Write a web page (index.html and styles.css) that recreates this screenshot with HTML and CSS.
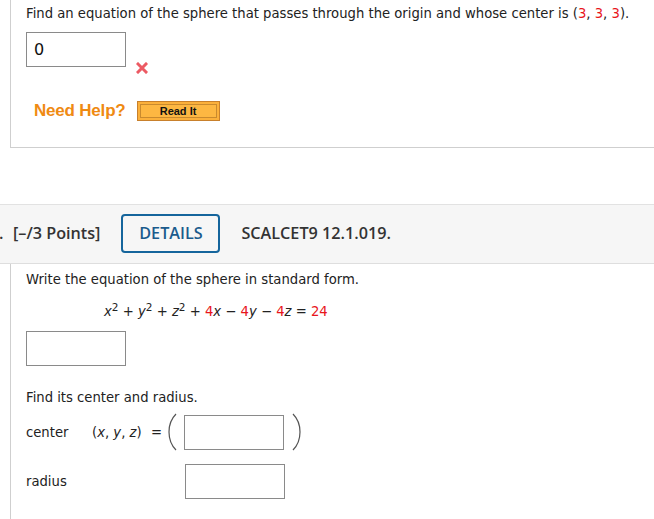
FILE: index.html
```html
<!DOCTYPE html>
<html>
<head>
<meta charset="utf-8">
<link rel="stylesheet" href="styles.css">
</head>
<body>
<div class="q1">
  <p class="prompt">Find an equation of the sphere that passes through the origin and whose center is (<span class="red">3</span>, <span class="red">3</span>, <span class="red">3</span>).</p>
  <div class="answer-row">
    <div class="box box-filled">0</div>
    <svg class="wrong" width="12" height="12" viewBox="0 0 12 12"><path d="M2 2 L10 10 M10 2 L2 10" stroke="#ec5a63" stroke-width="3" stroke-linecap="square"/></svg>
  </div>
  <div class="help-row">
    <span class="need-help">Need Help?</span>
    <span class="read-it"><span class="read-it-inner">Read It</span></span>
  </div>
</div>

<div class="q2-head">
  <span class="qnum">.</span>
  <span class="points">[–/3 Points]</span>
  <span class="details">DETAILS</span>
  <span class="code">SCALCET9 12.1.019.</span>
</div>
<div class="q2">
  <p class="prompt p-write">Write the equation of the sphere in standard form.</p>
  <p class="equation"><i>x</i><sup>2</sup> + <i>y</i><sup>2</sup> + <i>z</i><sup>2</sup> + <span class="red">4</span><i>x</i> − <span class="red">4</span><i>y</i> − <span class="red">4</span><i>z</i> = <span class="red">24</span></p>
  <div class="box box-std"></div>
  <p class="prompt p-find">Find its center and radius.</p>
  <div class="row row-center">
    <span class="label">center</span>
    <span class="xyz">(<i>x</i>, <i>y</i>, <i>z</i>)</span>
    <span class="eq">=</span>
    <svg class="paren" width="10" height="38" viewBox="0 0 10 38"><path d="M8 1 Q1 8 1 19 Q1 30 8 37" fill="none" stroke="#555" stroke-width="1.2"/></svg>
    <div class="box"></div>
    <svg class="paren paren-r" width="10" height="38" viewBox="0 0 10 38"><path d="M2 1 Q9 8 9 19 Q9 30 2 37" fill="none" stroke="#555" stroke-width="1.2"/></svg>
  </div>
  <div class="row row-radius">
    <span class="label">radius</span>
    <div class="box box-radius"></div>
  </div>
</div>
</body>
</html>
```
FILE: styles.css
```css
html, body {
  margin: 0;
  padding: 0;
  background: #fff;
}
body {
  font-family: "DejaVu Sans", Verdana, sans-serif;
  font-size: 13px;
  color: #222;
  width: 654px;
  height: 519px;
  overflow: hidden;
}
p { margin: 0; }
.red { color: #e8151b; }

.q1 {
  margin-left: 10px;
  border-left: 1px solid #cfcfcf;
  border-bottom: 1px solid #cfcfcf;
  padding: 6px 0 0 15px;
  height: 141px;
}
.prompt {
  line-height: 16px;
  font-size: 13.2px;
}
.answer-row {
  display: flex;
  align-items: flex-start;
  margin-top: 10px;
}
.box {
  width: 98px;
  height: 33px;
  border: 1px solid #8a8a8a;
  box-sizing: content-box;
  background: #fff;
}
.box-filled {
  font-size: 16px;
  line-height: 33px;
  padding-left: 7px;
  width: 91px;
  color: #111;
}
.wrong {
  margin-left: 10px;
  margin-top: 30px;
}
.help-row {
  display: flex;
  align-items: center;
  margin-top: 27px;
  padding-left: 8px;
}
.need-help {
  font-family: "Liberation Sans", Arial, sans-serif;
  font-weight: bold;
  font-size: 17px;
  color: #ef8a12;
  letter-spacing: -0.2px;
}
.read-it {
  margin-left: 11px;
  display: inline-block;
  border: 1px solid #c8802c;
  background: #fbb03b;
  padding: 2px;
  width: 77px;
  height: 14px;
}
.read-it-inner {
  display: block;
  border: 1px solid #c98a2e;
  background: #fdb742;
  height: 12px;
  font-family: "Liberation Sans", Arial, sans-serif;
  font-weight: bold;
  font-size: 11px;
  line-height: 12px;
  text-align: center;
  color: #111;
}

.q2-head {
  margin-top: 56px;
  height: 56px;
  padding-bottom: 2px;
  background: #f6f6f6;
  border-top: 1px solid #e2e2e2;
  border-bottom: 1px solid #dedede;
  display: flex;
  align-items: center;
  font-family: "Open Sans", "Noto Sans", sans-serif;
  font-weight: 600;
  font-size: 16.2px;
  color: #333;
}
.qnum {
  width: 14px;
  margin-left: -1px;
}
.details {
  margin-left: 21px;
  width: 95px;
  height: 35px;
  border: 2px solid #15659c;
  border-radius: 4px;
  color: #1b5b8d;
  display: flex;
  align-items: center;
  justify-content: center;
}
.code {
  margin-left: 21px;
}

.q2 {
  margin-left: 10px;
  border-left: 1px solid #cfcfcf;
  padding: 8px 0 0 15px;
  height: 258px;
}
.equation {
  margin-top: 15px;
  padding-left: 78px;
  line-height: 18px;
  font-size: 13.2px;
}
.equation sup {
  font-size: 10.5px;
  line-height: 0;
  vertical-align: 5px;
}
.box-std {
  margin-top: 10px;
}
.p-find {
  margin-top: 24px;
}
.row {
  display: flex;
  align-items: center;
}
.row-center {
  margin-top: 7px;
  height: 38px;
}
.label {
  width: 66px;
  font-size: 13.2px;
}
.xyz {
  width: 59px;
  font-size: 13.2px;
}
.eq {
  width: 17px;
  font-size: 13.2px;
}
.paren {
  display: block;
  margin-right: 6px;
}
.paren-r {
  margin-left: 7px;
  margin-right: 0;
}
.row-radius {
  margin-top: 13px;
}
.row-radius .label {
  width: 159px;
}
```
